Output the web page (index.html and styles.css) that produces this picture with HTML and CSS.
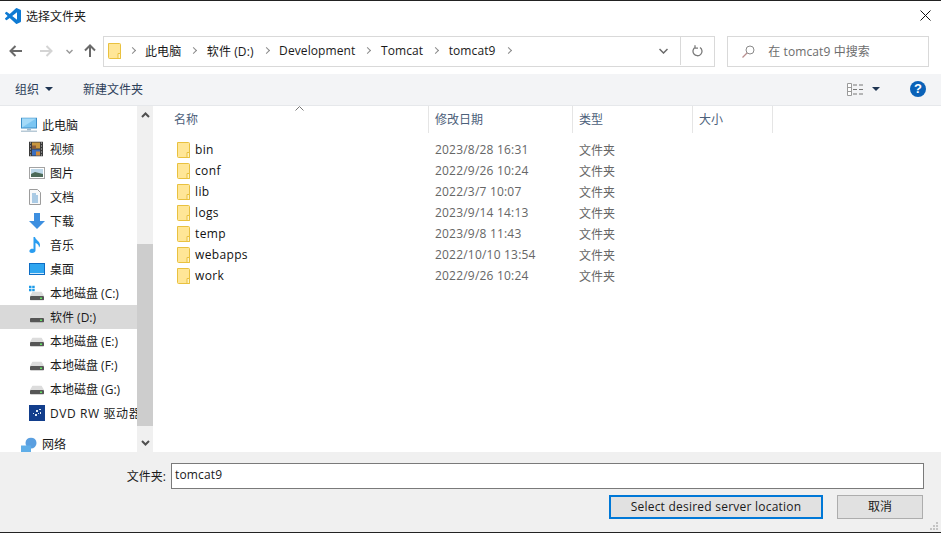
FILE: index.html
```html
<!DOCTYPE html>
<html>
<head>
<meta charset="utf-8">
<title>选择文件夹</title>
<link rel="stylesheet" href="styles.css">
</head>
<body>
<svg class="defs" width="0" height="0">
  <symbol id="folder" viewBox="0 0 13 16">
    <path d="M.5.5h11a1 1 0 0 1 1 1v14H1.500a1 1 0 0 1-1-1z" fill="#ffe697" stroke="#e9c13f"/>
    <path d="M10 10.500h2.500v5H10z" fill="#fff3c4" stroke="#e9c13f"/>
  </symbol>
  <symbol id="drive" viewBox="0 0 14 9">
    <path d="M2.500 0h9L14 4.500H0z" fill="#dcdcdc"/>
    <rect y="4.500" width="14" height="4.500" rx="1" fill="#565656"/>
    <rect x="10" y="6" width="2" height="1.500" fill="#62e262"/>
  </symbol>
</svg>

<div class="dialog">
  <div class="titlebar">
    <svg class="vscode" width="16" height="16" viewBox="0 0 24 24">
      <path d="M23.150 2.587 18.210.21a1.494 1.494 0 0 0-1.705.29l-9.460 8.630-4.120-3.128a.999.999 0 0 0-1.276.057L.327 7.261A1 1 0 0 0 .326 8.740L3.899 12 .326 15.260a1 1 0 0 0 .001 1.479L1.650 17.940a.999.999 0 0 0 1.276.057l4.120-3.128 9.460 8.630a1.492 1.492 0 0 0 1.704.29l4.942-2.377A1.500 1.500 0 0 0 24 20.060V3.939a1.500 1.500 0 0 0-.85-1.352zm-5.146 14.861L10.826 12l7.178-5.448v10.896z" fill="#0e7ad3"/>
    </svg>
    <span class="title">选择文件夹</span>
    <svg class="close" width="11" height="11" viewBox="0 0 11 11"><path d="M.5.500l10 10M10.500.5l-10 10" stroke="#111" fill="none"/></svg>
  </div>

  <div class="navbar">
    <svg class="nav-arrow" width="14" height="12" viewBox="0 0 14 12"><path d="M13 6H2M6.500 1 1.500 6l5 5" stroke="#6a6a6a" stroke-width="2" fill="none"/></svg>
    <svg class="nav-arrow forward" width="14" height="12" viewBox="0 0 14 12"><path d="M1 6h11M7.500 1l5 5-5 5" stroke="#d4d4d4" stroke-width="2" fill="none"/></svg>
    <svg class="nav-drop" width="7" height="5" viewBox="0 0 7 5"><path d="M.5 1 3.500 4l3-3" stroke="#9a9a9a" stroke-width="1.500" fill="none"/></svg>
    <svg class="nav-arrow up" width="12" height="14" viewBox="0 0 12 14"><path d="M6 13V2M1 6.500l5-5 5 5" stroke="#6a6a6a" stroke-width="2" fill="none"/></svg>
    <div class="address">
      <svg class="addr-folder" width="13" height="16"><use href="#folder"/></svg>
      <span class="crumb-sep"></span><span class="crumb">此电脑</span>
      <span class="crumb-sep"></span><span class="crumb">软件 (D:)</span>
      <span class="crumb-sep"></span><span class="crumb">Development</span>
      <span class="crumb-sep"></span><span class="crumb">Tomcat</span>
      <span class="crumb-sep"></span><span class="crumb">tomcat9</span>
      <span class="crumb-sep"></span>
      <span class="spacer"></span>
      <svg class="addr-drop" width="9" height="6" viewBox="0 0 9 6"><path d="M.5 1 4.500 5l4-4" stroke="#6a6a6a" stroke-width="1.500" fill="none"/></svg>
      <span class="refresh">
        <svg width="11" height="12" viewBox="0 0 11 12"><path d="M3.500 2.200A4.500 4.500 0 1 0 8 2.500M3 .2v3h3" stroke="#7a7a7a" stroke-width="1.300" fill="none"/></svg>
      </span>
    </div>
    <div class="search">
      <svg width="13" height="13" viewBox="0 0 13 13"><circle cx="8" cy="5" r="4" stroke="#8a8a8a" fill="none"/><path d="M5 8 .5 12.500" stroke="#b98f8f" stroke-width="1.200"/></svg>
      <span>在 tomcat9 中搜索</span>
    </div>
  </div>

  <div class="toolbar">
    <span class="tool">组织</span><span class="caret"></span>
    <span class="tool new">新建文件夹</span>
    <span class="spacer"></span>
    <svg class="views" width="16" height="13" viewBox="0 0 16 13">
      <path d="M.5.5h4v12h-4zM.5 4.500h4M.5 8.500h4" stroke="#9a9a9a" fill="#fff"/>
      <path d="M6 2h4M12 2h4M6 6.500h4M12 6.500h4M6 11h4M12 11h4" stroke="#777"/>
    </svg>
    <span class="caret views-caret"></span>
    <span class="help">?</span>
  </div>

  <div class="panes">
    <div class="sidebar">
      <div class="tree">
        <div class="node top">
          <svg class="ico" width="16" height="15" viewBox="0 0 16 15"><rect width="16" height="11" fill="#3d8fc8"/><rect x="1" y="1" width="14" height="9" fill="#7cc6f2"/><path d="M1 1h14L1 10z" fill="#a4daf8"/><path d="M6 11h4v2H6z" fill="#9dbbd0"/><path d="M0 13h16v1.500H0z" fill="#b7c9d6"/></svg>
          此电脑
        </div>
        <div class="node">
          <svg class="ico" width="14" height="15" viewBox="0 0 14 15"><rect width="14" height="15" fill="#3a3a3a"/><rect x="3" y="1" width="8" height="6" fill="#c8963e"/><path d="M3 4h4v3H3z" fill="#8a5a3a"/><rect x="3" y="8" width="8" height="6" fill="#3b6fc0"/><path d="M7 10h4v4H7z" fill="#d08a3a"/><path d="M1 1h1v1H1zM1 4h1v1H1zM1 7h1v1H1zM1 10h1v1H1zM1 13h1v1H1zM12 1h1v1h-1zM12 4h1v1h-1zM12 7h1v1h-1zM12 10h1v1h-1zM12 13h1v1h-1z" fill="#ccc"/></svg>
          视频
        </div>
        <div class="node">
          <svg class="ico" width="16" height="12" viewBox="0 0 16 12"><rect x=".5" y=".5" width="15" height="11" fill="#fff" stroke="#a3a3a3"/><rect x="2" y="2" width="12" height="8" fill="#bcd7e8"/><path d="M2 7l4-2 8 2v3H2z" fill="#4c6a58"/></svg>
          图片
        </div>
        <div class="node">
          <svg class="ico" width="12" height="16" viewBox="0 0 12 16"><path d="M.5.500h8l3 3v12H.5z" fill="#f8f9fa" stroke="#9c9c9c"/><path d="M3 5h4M3 7h6M3 9h6M3 11h6M3 13h6" stroke="#5d9ccf"/></svg>
          文档
        </div>
        <div class="node">
          <svg class="ico" width="16" height="16" viewBox="0 0 16 16"><path d="M5 0h6v8h5l-8 8-8-8h5z" fill="#3d8fe0"/></svg>
          下载
        </div>
        <div class="node">
          <svg class="ico" width="12" height="16" viewBox="0 0 12 16"><path d="M4.500 0H6c.5 3 5 4 5 8 0 1-.5 2-1 2.500.3-2.500-2-4-3.500-4.500v7.500C6.500 15 5 16 3 16s-3-1-2.500-2.500S3 11.500 4.500 12z" fill="#2a9df0"/></svg>
          音乐
        </div>
        <div class="node">
          <svg class="ico" width="16" height="12" viewBox="0 0 16 12"><rect width="16" height="12" fill="#0d6dc4"/><rect x="1" y="1" width="14" height="9" fill="#2fa6f0"/><path d="M1 10.500h14" stroke="#cfe8fa"/></svg>
          桌面
        </div>
        <div class="node">
          <svg class="ico" width="16" height="15" viewBox="0 0 16 15"><path d="M0 0h2.500v2.500H0zM3.200 0h2.500v2.500H3.200zM0 3.200h2.500v2.500H0zM3.200 3.200h2.500v2.500H3.200z" fill="#1e9be8"/><svg x="1" y="6" width="14" height="9"><use href="#drive"/></svg></svg>
          本地磁盘 (C:)
        </div>
        <div class="node selected">
          <svg class="ico drive" width="14" height="9"><use href="#drive"/></svg>
          软件 (D:)
        </div>
        <div class="node">
          <svg class="ico drive" width="14" height="9"><use href="#drive"/></svg>
          本地磁盘 (E:)
        </div>
        <div class="node">
          <svg class="ico drive" width="14" height="9"><use href="#drive"/></svg>
          本地磁盘 (F:)
        </div>
        <div class="node">
          <svg class="ico drive" width="14" height="9"><use href="#drive"/></svg>
          本地磁盘 (G:)
        </div>
        <div class="node">
          <svg class="ico" width="16" height="16" viewBox="0 0 16 16"><rect width="16" height="16" fill="#123e8c"/><path d="M4 8h1v1H4zM7 5h2v2H7zM10 4h2v1h-2zM6 9h2v2H6zM9 8h1v1H9zM11 7h1v2h-1z" fill="#dfeaf5"/></svg>
          <span class="clip">DVD RW 驱动器</span>
        </div>
        <div class="node top network">
          <svg class="ico" width="16" height="15" viewBox="0 0 16 15"><circle cx="10" cy="5.500" r="5.500" fill="#5a9fe0"/><rect y="8" width="10" height="7" fill="#5faee8"/></svg>
          网络
        </div>
      </div>
      <div class="scrollbar">
        <svg class="sb-arrow" width="9" height="6" viewBox="0 0 9 6"><path d="M1 5 4.500 1.500 8 5" stroke="#505050" stroke-width="2" fill="none"/></svg>
        <div class="sb-track"><div class="sb-thumb"></div></div>
        <svg class="sb-arrow" width="9" height="6" viewBox="0 0 9 6"><path d="M1 1l3.500 3.500L8 1" stroke="#505050" stroke-width="2" fill="none"/></svg>
      </div>
    </div>

    <div class="files">
      <div class="head">
        <div class="col name">名称</div>
        <div class="col date">修改日期</div>
        <div class="col kind">类型</div>
        <div class="col size">大小</div>
        <svg class="sort" width="9" height="5" viewBox="0 0 9 5"><path d="M.5 4.500l4-4 4 4" stroke="#777" fill="none"/></svg>
      </div>
      <div class="rows">
        <div class="row"><div class="cell name"><svg width="13" height="16"><use href="#folder"/></svg>bin</div><div class="cell date">2023/8/28 16:31</div><div class="cell kind">文件夹</div></div>
        <div class="row"><div class="cell name"><svg width="13" height="16"><use href="#folder"/></svg>conf</div><div class="cell date">2022/9/26 10:24</div><div class="cell kind">文件夹</div></div>
        <div class="row"><div class="cell name"><svg width="13" height="16"><use href="#folder"/></svg>lib</div><div class="cell date">2022/3/7 10:07</div><div class="cell kind">文件夹</div></div>
        <div class="row"><div class="cell name"><svg width="13" height="16"><use href="#folder"/></svg>logs</div><div class="cell date">2023/9/14 14:13</div><div class="cell kind">文件夹</div></div>
        <div class="row"><div class="cell name"><svg width="13" height="16"><use href="#folder"/></svg>temp</div><div class="cell date">2023/9/8 11:43</div><div class="cell kind">文件夹</div></div>
        <div class="row"><div class="cell name"><svg width="13" height="16"><use href="#folder"/></svg>webapps</div><div class="cell date">2022/10/10 13:54</div><div class="cell kind">文件夹</div></div>
        <div class="row"><div class="cell name"><svg width="13" height="16"><use href="#folder"/></svg>work</div><div class="cell date">2022/9/26 10:24</div><div class="cell kind">文件夹</div></div>
      </div>
    </div>
  </div>

  <div class="bottom">
    <div class="field">
      <label class="field-label">文件夹:</label>
      <div class="input">tomcat9</div>
    </div>
    <div class="buttons">
      <button class="btn primary">Select desired server location</button>
      <button class="btn cancel">取消</button>
    </div>
    <svg class="grip" width="10" height="10" viewBox="0 0 10 10"><path d="M7 1h2v2H7zM4 4h2v2H4zM7 4h2v2H7zM1 7h2v2H1zM4 7h2v2H4zM7 7h2v2H7z" fill="#c4c4c4"/></svg>
  </div>
</div>
</body>
</html>
```

FILE: styles.css
```css
* {
  box-sizing: border-box;
}

html, body {
  margin: 0;
  padding: 0;
}

body {
  width: 941px;
  height: 533px;
  overflow: hidden;
  background: #fff;
  color: #1a1a1a;
  font-family: "Open Sans", "Noto Sans CJK SC", sans-serif;
  font-size: 12px;
}

.defs {
  display: block;
  height: 0;
}

svg {
  flex: none;
}

.dialog {
  height: 533px;
  display: flex;
  flex-direction: column;
  border-top: 1px solid #222;
  border-bottom: 1px solid #222;
}

.spacer {
  flex: 1;
}

/* title bar */
.titlebar {
  height: 31px;
  display: flex;
  align-items: center;
  padding: 0 10px 2px 5px;
}

.title {
  margin-left: 5px;
}

.close {
  margin-left: auto;
}

/* back / forward + address + search */
.navbar {
  height: 42px;
  display: flex;
  align-items: center;
  padding: 0 12px 4px 9px;
}

.nav-arrow.forward {
  margin-left: 16px;
}

.nav-drop {
  margin-left: 13px;
}

.nav-arrow.up {
  margin-left: 11px;
}

.address {
  width: 613px;
  height: 31px;
  margin-left: 7px;
  display: flex;
  align-items: center;
  border: 1px solid #d9d9d9;
  padding-left: 4px;
  padding-bottom: 1px;
}

.crumb-sep {
  width: 5px;
  height: 5px;
  margin: 0 10.500px 0 10px;
  border-top: 1.500px solid #8a8a8a;
  border-right: 1.500px solid #8a8a8a;
  transform: rotate(45deg);
}

.addr-folder + .crumb-sep {
  margin: 0 10px 0 9px;
}

.crumb {
  white-space: nowrap;
  letter-spacing: .1px;
}

.addr-drop {
  margin-right: 12px;
}

.refresh {
  width: 34px;
  height: 29px;
  display: flex;
  align-items: center;
  justify-content: center;
  border-left: 1px solid #d9d9d9;
}

.search {
  width: 202px;
  height: 31px;
  margin-left: 12px;
  display: flex;
  align-items: center;
  gap: 13px;
  padding-left: 14px;
  border: 1px solid #d9d9d9;
  color: #6d6d6d;
  letter-spacing: .1px;
}

/* command bar */
.toolbar {
  height: 32px;
  display: flex;
  align-items: center;
  padding: 0 15px 1px;
  background: #f3f4f6;
  border-bottom: 1px solid #e6e8eb;
  color: #2d3f5a;
}

.caret {
  width: 0;
  height: 0;
  margin-left: 6px;
  border-left: 4px solid transparent;
  border-right: 4px solid transparent;
  border-top: 4px solid #1f3552;
}

.tool.new {
  margin-left: 30px;
}

.views {
  margin-right: 9px;
}

.views-caret {
  margin-left: 0;
}

.help {
  width: 16px;
  height: 16px;
  margin-left: 30px;
  border-radius: 50%;
  background: #0a62b8;
  color: #fff;
  font-family: "Liberation Sans", sans-serif;
  font-size: 13px;
  font-weight: bold;
  line-height: 16px;
  text-align: center;
}

/* navigation pane + file list */
.panes {
  height: 346px;
  display: flex;
}

.sidebar {
  width: 153px;
  display: flex;
  flex: none;
}

.tree {
  width: 137px;
  padding-top: 7px;
}

.node {
  height: 24px;
  display: flex;
  align-items: center;
  padding-left: 50px;
  white-space: nowrap;
  position: relative;
}

.node .ico {
  position: absolute;
  left: 29px;
  top: 50%;
  transform: translateY(-50%);
}

.node .ico.drive {
  left: 30px;
  margin-top: 1px;
}

.node.top {
  padding-left: 42px;
}

.node.top .ico {
  left: 21px;
}

.node.network {
  height: 14px;
  margin-top: 13px;
  line-height: 14px;
}

.node.selected {
  background: #d9d9d9;
}

.clip {
  overflow: hidden;
  width: 87px;
  letter-spacing: .6px;
}

.scrollbar {
  width: 16px;
  display: flex;
  flex-direction: column;
  align-items: center;
  background: #f0f0f0;
}

.sb-arrow {
  margin: 6px 0;
}

.sb-track {
  flex: 1;
  width: 100%;
  padding-top: 120px;
}

.sb-thumb {
  height: 182px;
  background: #cdcdcd;
}

.files {
  flex: 1;
  padding-left: 2px;
}

.head {
  height: 27px;
  display: flex;
  position: relative;
  color: #4c607a;
}

.sort {
  position: absolute;
  left: 140px;
  top: 0;
}

.col {
  height: 27px;
  line-height: 28px;
  padding-left: 6px;
  border-right: 1px solid #e5e5e5;
}

.col.name {
  width: 274px;
  padding-left: 19px;
}

.col.date {
  width: 144px;
}

.col.kind {
  width: 120px;
}

.col.size {
  width: 80px;
}

.rows {
  padding-top: 6px;
}

.row {
  height: 21px;
  display: flex;
  align-items: center;
}

.cell.name {
  width: 274px;
  display: flex;
  align-items: center;
  gap: 5px;
  padding-left: 22px;
  color: #111;
  letter-spacing: .35px;
}

.cell.date {
  width: 144px;
  padding-left: 6px;
  color: #666;
  letter-spacing: .2px;
}

.cell.kind {
  padding-left: 6px;
  color: #666;
}

/* file name + buttons */
.bottom {
  flex: 1;
  position: relative;
  background: #f0f0f0;
  padding: 11px 17px 0 0;
}

.field {
  display: flex;
  align-items: center;
  justify-content: flex-end;
}

.field-label {
  margin-right: 5px;
}

.input {
  width: 753px;
  height: 26px;
  line-height: 22px;
  padding-left: 3px;
  background: #fff;
  border: 1px solid #7a7a7a;
  letter-spacing: .15px;
}

.buttons {
  display: flex;
  justify-content: flex-end;
  gap: 14px;
  margin-top: 6px;
  margin-right: 1px;
}

.btn {
  height: 24px;
  padding: 0 0 2px;
  background: #e1e1e1;
  border: 1px solid #adadad;
  color: #1a1a1a;
  font: inherit;
}

.btn.primary {
  width: 214px;
  border: 2px solid #0078d7;
  letter-spacing: .23px;
}

.btn.cancel {
  width: 86px;
}

.grip {
  position: absolute;
  right: 2px;
  bottom: 1px;
}
```
